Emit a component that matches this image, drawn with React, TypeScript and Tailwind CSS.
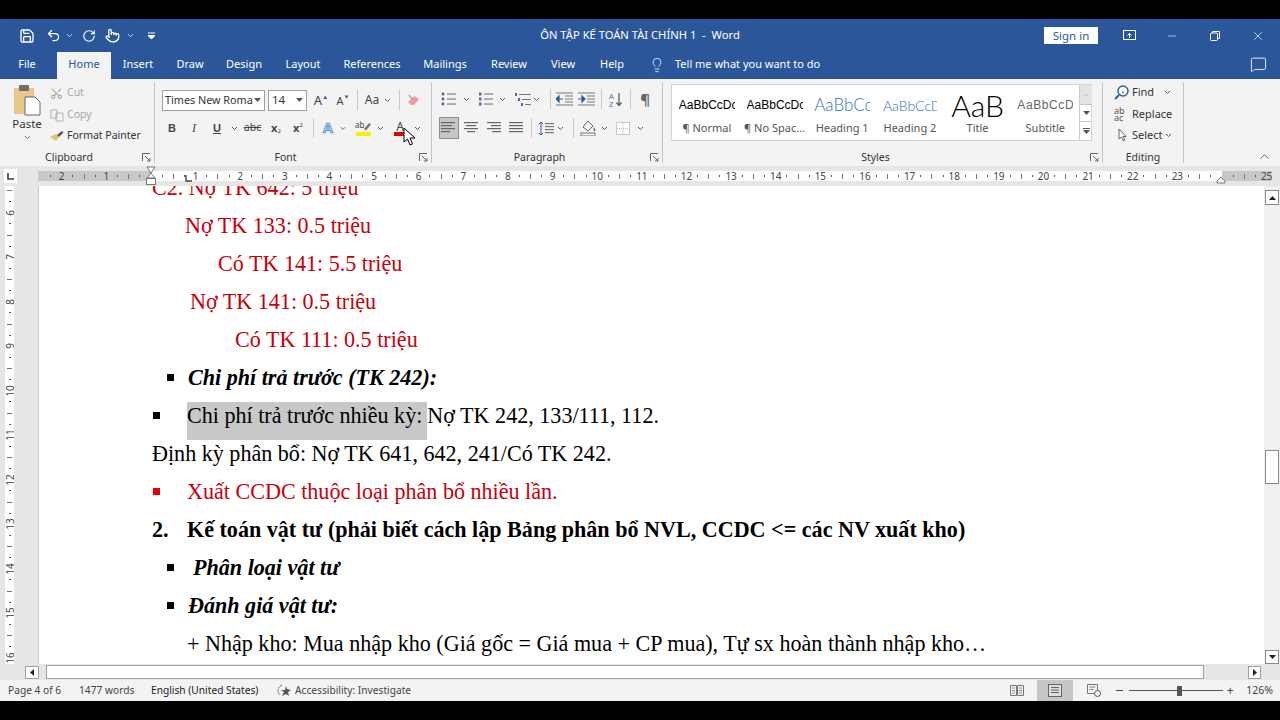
import type { ReactNode } from "react";
import {
  ChevronDown,
  ChevronUp,
  Lightbulb,
  Minus,
  Pointer,
  RotateCw,
  Save,
  Scissors,
  Undo2,
  X,
  MessageSquare,
} from "lucide-react";

function Cell({ w, ml, children }: { w: string; ml?: string; children?: ReactNode }) {
  return <div className={`flex shrink-0 items-center justify-center ${w} ${ml ?? ""}`}>{children}</div>;
}

function Chev({ className }: { className?: string }) {
  return (
    <svg width="7" height="5" viewBox="0 0 7 5" className={className ?? ""}>
      <path d="M1 1l2.5 2.5L6 1" fill="none" stroke="#555" strokeWidth="1" />
    </svg>
  );
}

function Sep({ ml }: { ml: string }) {
  return <div className={`h-[20px] w-px shrink-0 bg-[#c9c9c9] ${ml}`} />;
}

function Launcher() {
  return (
    <svg width="9" height="9" viewBox="0 0 9 9">
      <path d="M.5 8V.5H8M3 3l5 5M8 5v3H5" fill="none" stroke="#666" strokeWidth="1" />
    </svg>
  );
}

function GroupLabel({ children, launcherClass, labelClass }: { children: string; launcherClass: string; labelClass?: string }) {
  return (
    <div className="flex h-[17px] items-center">
      <div className={`flex-1 text-center text-[10.5px] text-[#333] ${labelClass ?? ""}`}>{children}</div>
      <div className={launcherClass}>
        <Launcher />
      </div>
    </div>
  );
}

// horizontal lines icon used for align / list buttons
function Lines({ rows, color = "#666" }: { rows: [number, number][]; color?: string }) {
  return (
    <svg width="16" height="14" viewBox="0 0 16 14">
      {rows.map(([x, w], i) => (
        <rect key={i} x={x} y={1 + i * 3} width={w} height="1.2" fill={color} />
      ))}
    </svg>
  );
}

function ListIcon({ numbered }: { numbered?: boolean }) {
  return (
    <svg width="16" height="15" viewBox="0 0 16 15">
      {[2, 7, 12].map((y) =>
        numbered ? (
          <rect key={y} x="1" y={y - 1.5} width="2.5" height="3" fill="#4a6fa5" />
        ) : (
          <circle key={y} cx="2" cy={y} r="1.4" fill="#44608f" />
        ),
      )}
      {[2, 7, 12].map((y) => (
        <rect key={y} x="6" y={y - 0.5} width="9" height="1.1" fill="#777" />
      ))}
    </svg>
  );
}

function IndentIcon({ flip }: { flip?: boolean }) {
  return (
    <svg width="17" height="14" viewBox="0 0 17 14">
      <rect x="0" y="0.5" width="17" height="1" fill="#777" />
      <rect x="0" y="12.5" width="17" height="1" fill="#777" />
      {[3.5, 6.5, 9.5].map((y) => (
        <rect key={y} x="9" y={y} width="8" height="1" fill="#777" />
      ))}
      <path d={flip ? "M0 7h4M4 4l3 3-3 3z" : "M7 7H3M3 4L0 7l3 3z"} stroke="#2f5c9a" strokeWidth="1.2" fill="#2f5c9a" />
    </svg>
  );
}

function StyleItem({ sample, label, w }: { sample: ReactNode; label: string; w: string }) {
  return (
    <div className={`flex shrink-0 flex-col items-center ${w}`}>
      <div className="flex h-[34px] w-full items-center justify-center whitespace-nowrap">{sample}</div>
      <div className="-mt-[2px] whitespace-nowrap text-[11px] text-[#555]">{label}</div>
    </div>
  );
}

function HRuler() {
  const cells = [];
  for (let k = -9; k <= 100; k++) {
    const m = ((k % 4) + 4) % 4;
    let inner: ReactNode = null;
    if (k === 0 || k === 96) inner = null;
    else if (m === 0) inner = <span className="text-[10px] leading-none text-[#444]">{Math.abs(k) / 4}</span>;
    else if (m === 2) inner = <div className="h-[5px] w-px bg-[#777]" />;
    else inner = <div className="h-[2px] w-px bg-[#555]" />;
    cells.push(
      <div key={k} className="flex h-full w-[11.16px] shrink-0 items-center justify-center">
        {inner}
      </div>,
    );
  }
  return cells;
}

function VRuler() {
  const cells = [];
  for (let k = -2; k <= 42; k++) {
    const m = ((k % 4) + 4) % 4;
    let inner: ReactNode = null;
    if (m === 0) inner = <span className="-rotate-90 text-[10px] leading-none text-[#444]">{6 + k / 4}</span>;
    else if (m === 2) inner = <div className="h-px w-[5px] bg-[#777]" />;
    else inner = <div className="h-px w-[2px] bg-[#555]" />;
    cells.push(
      <div key={k} className="flex h-[11.14px] w-full shrink-0 items-center justify-center">
        {inner}
      </div>,
    );
  }
  return cells;
}

function Line({ pl, className, children }: { pl: string; className?: string; children: ReactNode }) {
  return <div className={`flex h-[38px] shrink-0 items-center whitespace-pre ${pl} ${className ?? ""}`}>{children}</div>;
}

function Bullet({ ml, color = "bg-black" }: { ml: string; color?: string }) {
  return <div className={`-mt-[2px] h-[7px] w-[7px] shrink-0 ${color} ${ml}`} />;
}

const RED = "text-[#c8000c]";

export default function App() {
  return (
    <div className="flex h-screen w-[1280px] flex-col overflow-hidden bg-black font-['Noto_Sans',sans-serif]">
      <div className="h-[19px] shrink-0 bg-black" />

      {/* title bar */}
      <div className="h-[60px] shrink-0 bg-[#2b579a] text-white">
        <div className="flex h-[33px] items-center">
          <div className="flex w-[340px] items-center">
            <Cell w="w-[18px]" ml="ml-[18px]">
              <Save size={16} strokeWidth={2} />
            </Cell>
            <Cell w="w-[20px]" ml="ml-[7px]">
              <Undo2 size={15} strokeWidth={2} />
            </Cell>
            <Cell w="w-[10px]" ml="ml-[1px]">
              <ChevronDown size={9} strokeWidth={2} />
            </Cell>
            <Cell w="w-[20px]" ml="ml-[5px]">
              <RotateCw size={14} strokeWidth={2} />
            </Cell>
            <Cell w="w-[16px]" ml="ml-[5px]">
              <Pointer size={15} strokeWidth={2} />
            </Cell>
            <Cell w="w-[10px]" ml="ml-[5px]">
              <ChevronDown size={9} strokeWidth={2} />
            </Cell>
            <Cell w="w-[10px]" ml="ml-[11px]">
              <svg width="7" height="8" viewBox="0 0 7 8">
                <path d="M0 1h7M0 3.5h7L3.5 7z" stroke="white" fill="white" strokeWidth="1" />
              </svg>
            </Cell>
          </div>
          <div className="flex-1 text-center text-[11.2px] whitespace-pre">ÔN TẬP KẾ TOÁN TÀI CHÍNH 1  -  Word</div>
          <div className="flex w-[340px] items-center">
            <div className="ml-[104px] flex h-[17px] w-[54px] items-center justify-center bg-white text-[11.5px] text-[#2b579a]">
              Sign in
            </div>
            <Cell w="w-[16px]" ml="ml-[23px]">
              <svg width="13" height="11" viewBox="0 0 13 11">
                <rect x=".5" y=".5" width="12" height="9" fill="none" stroke="white" />
                <path d="M6.5 8V3.5M4.5 5.5l2-2 2 2" stroke="white" fill="none" />
              </svg>
            </Cell>
            <Cell w="w-[16px]" ml="ml-[27px]">
              <Minus size={12} strokeWidth={1.2} />
            </Cell>
            <Cell w="w-[16px]" ml="ml-[27px]">
              <svg width="10" height="10" viewBox="0 0 10 10">
                <rect x=".5" y="2" width="7" height="7.5" rx="1" fill="none" stroke="white" />
                <path d="M2.5 2V.5h7v7H7.5" fill="none" stroke="white" />
              </svg>
            </Cell>
            <Cell w="w-[16px]" ml="ml-[27px]">
              <X size={14} strokeWidth={1.2} />
            </Cell>
          </div>
        </div>
        <div className="flex h-[27px] items-end text-[11px]">
          <Cell w="w-[38px] h-[27px] pb-[2px]" ml="ml-[8px]">
            File
          </Cell>
          <Cell w="w-[54px] h-[27px] pb-[2px] bg-[#f3f3f3] text-[#2b579a]" ml="ml-[11px]">
            Home
          </Cell>
          <Cell w="w-[54px] h-[27px] pb-[2px]">Insert</Cell>
          <Cell w="w-[50px] h-[27px] pb-[2px]">Draw</Cell>
          <Cell w="w-[58px] h-[27px] pb-[2px]">Design</Cell>
          <Cell w="w-[60px] h-[27px] pb-[2px]">Layout</Cell>
          <Cell w="w-[78px] h-[27px] pb-[2px]">References</Cell>
          <Cell w="w-[68px] h-[27px] pb-[2px]">Mailings</Cell>
          <Cell w="w-[60px] h-[27px] pb-[2px]">Review</Cell>
          <Cell w="w-[48px] h-[27px] pb-[2px]">View</Cell>
          <Cell w="w-[50px] h-[27px] pb-[2px]">Help</Cell>
          <Cell w="w-[16px] h-[27px] pb-[2px]" ml="ml-[12px]">
            <Lightbulb size={16} strokeWidth={1.2} />
          </Cell>
          <div className="ml-[10px] flex h-[27px] items-center whitespace-nowrap pb-[2px]">Tell me what you want to do</div>
          <div className="flex h-[27px] flex-1 items-center justify-end pb-[3px] pr-[13px]">
            <MessageSquare size={17} strokeWidth={1.2} />
          </div>
        </div>
      </div>

      {/* ribbon */}
      <div className="relative flex h-[87px] shrink-0 bg-[#f3f3f3] text-[#444]">
        {/* clipboard */}
        <div className="flex w-[154px] shrink-0 flex-col">
          <div className="flex h-[70px] pt-[2px]">
            <div className="ml-[8px] flex w-[38px] flex-col items-center">
              <svg width="28" height="32" viewBox="0 0 28 32" className="mt-[3px]">
                <rect x="1" y="4" width="20" height="26" fill="#e8c88a" />
                <rect x="6" y="1" width="10" height="6" rx="1" fill="#6d6d6d" />
                <path d="M12 13h10l5 5v13H12z" fill="white" stroke="#666" />
              </svg>
              <div className="mt-[1px] text-[11.5px] leading-[14px] text-[#333]">Paste</div>
              <ChevronDown size={9} className="mt-[2px]" />
            </div>
            <div className="ml-[4px] flex flex-col pt-[1px]">
              <div className="flex h-[22px] items-center text-[10.5px] text-[#a6a6a6]">
                <Scissors size={13} className="mr-[4px] -rotate-90" />
                <span>Cut</span>
              </div>
              <div className="flex h-[22px] items-center text-[10.5px] text-[#a6a6a6]">
                <svg width="14" height="13" viewBox="0 0 14 13" className="mr-[3px]">
                  <path d="M1 1h6v8H1zM6 4h7v8H6z" fill="#f3f3f3" stroke="#b0b0b0" />
                </svg>
                <span>Copy</span>
              </div>
              <div className="flex h-[20px] items-center text-[10.5px] text-[#333]">
                <svg width="14" height="12" viewBox="0 0 14 12" className="mr-[3px]">
                  <path d="M0 7l6-3 3 3-3 4z" fill="#e3c06e" />
                  <path d="M7 5l5-4 1.5 1.5L9 7z" fill="#555" />
                </svg>
                <span className="whitespace-nowrap">Format Painter</span>
              </div>
            </div>
          </div>
          <GroupLabel launcherClass="mr-[3px]" labelClass="pr-[4px]">Clipboard</GroupLabel>
        </div>
        <div className="my-[3px] w-px shrink-0 bg-[#c4c4c4]" />

        {/* font */}
        <div className="flex w-[276px] shrink-0 flex-col pl-[7px]">
          <div className="flex h-[70px] flex-col">
            <div className="mt-[10px] flex h-[22px] items-center">
              <div className="flex h-[21px] w-[103px] shrink-0 items-center justify-between border border-[#9f9f9f] bg-white pl-[2px] pr-[3px] text-[10.8px] whitespace-nowrap text-[#333]">
                <span>Times New Roma</span>
                <svg width="7" height="4" viewBox="0 0 7 4">
                  <path d="M0 0h7L3.5 4z" fill="#555" />
                </svg>
              </div>
              <div className="ml-[3px] flex h-[21px] w-[39px] shrink-0 items-center justify-between border border-[#9f9f9f] bg-white pl-[3px] pr-[3px] text-[11.5px] text-[#333]">
                <span>14</span>
                <svg width="7" height="4" viewBox="0 0 7 4">
                  <path d="M0 0h7L3.5 4z" fill="#555" />
                </svg>
              </div>
              <Cell w="w-[24px]" ml="ml-[2px]">
                <span className="text-[13px] leading-none">A</span>
                <span className="mb-[6px] text-[6px] leading-none text-[#2f5c9a]">▲</span>
              </Cell>
              <Cell w="w-[20px]">
                <span className="text-[11px] leading-none">A</span>
                <span className="mb-[6px] text-[6px] leading-none text-[#2f5c9a]">▼</span>
              </Cell>
              <Sep ml="ml-[4px]" />
              <Cell w="w-[20px] text-[12px]" ml="ml-[4px]">
                Aa
              </Cell>
              <Cell w="w-[10px]">
                <Chev />
              </Cell>
              <Sep ml="ml-[7px]" />
              <Cell w="w-[20px]" ml="ml-[4px]">
                <svg width="14" height="13" viewBox="0 0 14 13">
                  <path d="M1 8l6-6 5 3-5 6H4z" fill="#ef9aa8" />
                  <path d="M2 1l3 4" stroke="#777" />
                </svg>
              </Cell>
            </div>
            <div className="mt-[6px] flex h-[22px] items-center text-[11px] text-[#444]">
              <Cell w="w-[20px]">
                <b className="font-['Liberation_Sans',sans-serif]">B</b>
              </Cell>
              <Cell w="w-[24px]">
                <i className="font-['Liberation_Serif',serif] text-[12px]">I</i>
              </Cell>
              <Cell w="w-[22px]">
                <u className="font-['Liberation_Sans',sans-serif] font-bold">U</u>
              </Cell>
              <Cell w="w-[12px]">
                <Chev />
              </Cell>
              <Cell w="w-[25px] line-through text-[10.5px]">abc</Cell>
              <Cell w="w-[22px]">
                <b>x</b>
                <span className="mt-[6px] text-[6px] leading-none">2</span>
              </Cell>
              <Cell w="w-[22px]">
                <b>x</b>
                <span className="mb-[6px] text-[6px] leading-none">2</span>
              </Cell>
              <Sep ml="ml-[4px]" />
              <Cell w="w-[24px] font-['Liberation_Sans',sans-serif] text-[15px] font-bold text-[#c7daf2] [-webkit-text-stroke:0.7px_#2f6fbb]" ml="ml-[2px]">
                A
              </Cell>
              <Cell w="w-[6px]">
                <Chev />
              </Cell>
              <Cell w="w-[26px]" ml="ml-[4px]">
                <svg width="17" height="15" viewBox="0 0 17 15">
                  <text x="0" y="7" fontSize="8" fill="#444">ab</text>
                  <path d="M9 8l5-6 2 1.5-5 6z" fill="#777" />
                  <rect x="1" y="11" width="15" height="4" fill="#f4f000" />
                </svg>
              </Cell>
              <Cell w="w-[8px]">
                <Chev />
              </Cell>
              <Cell w="w-[24px]" ml="ml-[4px]">
                <div className="flex flex-col items-center">
                  <span className="text-[12px] leading-[11px] text-[#444]">A</span>
                  <div className="h-[4px] w-[13px] bg-[#e00000]" />
                </div>
              </Cell>
              <Cell w="w-[10px]">
                <Chev />
              </Cell>
            </div>
          </div>
          <GroupLabel launcherClass="mr-[3px]" labelClass="pr-[10px]">Font</GroupLabel>
        </div>
        <div className="my-[3px] w-px shrink-0 bg-[#c4c4c4]" />

        {/* paragraph */}
        <div className="flex w-[230px] shrink-0 flex-col pl-[7px]">
          <div className="flex h-[70px] flex-col">
            <div className="mt-[9px] flex h-[22px] items-center">
              <Cell w="w-[20px]">
                <ListIcon />
              </Cell>
              <Cell w="w-[10px]" ml="ml-[2px]">
                <Chev />
              </Cell>
              <Cell w="w-[20px]" ml="ml-[5px]">
                <ListIcon numbered />
              </Cell>
              <Cell w="w-[10px]" ml="ml-px">
                <Chev />
              </Cell>
              <Cell w="w-[18px]" ml="ml-[7px]">
                <svg width="17" height="15" viewBox="0 0 17 15">
                  <rect x="0" y="1" width="2" height="3" fill="#4a6fa5" />
                  <rect x="4" y="2" width="12" height="1" fill="#777" />
                  <rect x="3" y="6" width="2" height="3" fill="#4a6fa5" />
                  <rect x="7" y="7" width="9" height="1" fill="#777" />
                  <rect x="6" y="11" width="2" height="3" fill="#4a6fa5" />
                  <rect x="10" y="12" width="6" height="1" fill="#777" />
                </svg>
              </Cell>
              <Cell w="w-[8px]">
                <Chev />
              </Cell>
              <Sep ml="ml-[10px]" />
              <Cell w="w-[22px]" ml="ml-[2px]">
                <IndentIcon />
              </Cell>
              <Cell w="w-[22px]">
                <IndentIcon flip />
              </Cell>
              <Sep ml="ml-[4px]" />
              <Cell w="w-[20px]" ml="ml-[4px]">
                <svg width="14" height="15" viewBox="0 0 14 15">
                  <text x="0" y="7" fontSize="7.5" fill="#4a6fa5">A</text>
                  <text x="0" y="14.5" fontSize="7.5" fill="#4a6fa5">Z</text>
                  <path d="M10 1v12M7.5 10.5l2.5 3 2.5-3" fill="none" stroke="#555" strokeWidth="1.2" />
                </svg>
              </Cell>
              <Sep ml="ml-[4px]" />
              <Cell w="w-[20px] text-[15px] font-bold leading-none text-[#666]" ml="ml-[4px]">
                ¶
              </Cell>
            </div>
            <div className="mt-[7px] flex h-[22px] items-center">
              <Cell w="w-[20px] h-[22px] border border-[#8f8f8f] bg-[#c6c6c6]">
                <Lines rows={[[0, 14], [0, 11], [0, 14], [0, 9]]} />
              </Cell>
              <Cell w="w-[20px]" ml="ml-[2px]">
                <Lines rows={[[1, 14], [3, 10], [1, 14], [4, 8]]} />
              </Cell>
              <Cell w="w-[20px]" ml="ml-[2px]">
                <Lines rows={[[2, 14], [6, 10], [2, 14], [7, 9]]} />
              </Cell>
              <Cell w="w-[20px]" ml="ml-[3px]">
                <Lines rows={[[1, 14], [1, 14], [1, 14], [1, 14]]} />
              </Cell>
              <Sep ml="ml-[5px]" />
              <Cell w="w-[20px]" ml="ml-[4px]">
                <svg width="16" height="15" viewBox="0 0 16 15">
                  <path d="M3 1v13M1 3l2-2 2 2M1 12l2 2 2-2" fill="none" stroke="#2f5c9a" />
                  {[2, 5, 8, 11].map((y) => (
                    <rect key={y} x="7" y={y} width="9" height="1.2" fill="#777" />
                  ))}
                </svg>
              </Cell>
              <Cell w="w-[8px]">
                <Chev />
              </Cell>
              <Sep ml="ml-[9px]" />
              <Cell w="w-[20px]" ml="ml-[4px]">
                <svg width="17" height="16" viewBox="0 0 17 16">
                  <path d="M8 1L3 7l5 4 5-5z" fill="#f3f3f3" stroke="#666" />
                  <path d="M14 7c1 2 2 3 1 4s-2 0-1-4z" fill="#666" />
                  <rect x="1" y="13" width="14" height="3" fill="#f3f3f3" stroke="#777" />
                </svg>
              </Cell>
              <Cell w="w-[8px]" ml="ml-[2px]">
                <Chev />
              </Cell>
              <Cell w="w-[20px]" ml="ml-[5px]">
                <svg width="14" height="13" viewBox="0 0 14 13">
                  <rect x=".5" y=".5" width="13" height="12" fill="white" stroke="#999" strokeDasharray="1 1" />
                  <path d="M7 1v11M1 6.5h12" stroke="#bbb" strokeDasharray="1 1" />
                </svg>
              </Cell>
              <Cell w="w-[8px]" ml="ml-[3px]">
                <Chev />
              </Cell>
            </div>
          </div>
          <GroupLabel launcherClass="mr-[3px]" labelClass="pr-[10px]">Paragraph</GroupLabel>
        </div>
        <div className="my-[3px] w-px shrink-0 bg-[#c4c4c4]" />

        {/* styles */}
        <div className="flex w-[439px] shrink-0 flex-col pl-[8px]">
          <div className="flex h-[70px]">
            <div className="mt-[5px] flex h-[57px] w-[421px] shrink-0 border border-[#d4d4d4] bg-white pt-[3px]">
              <div className="ml-px flex w-[406px] shrink-0">
                <StyleItem w="w-[67.7px]" label="¶ Normal" sample={<span className="w-[56px] overflow-hidden font-['Liberation_Sans',sans-serif] text-[12px] text-black">AaBbCcDc</span>} />
                <StyleItem w="w-[67.7px]" label="¶ No Spac..." sample={<span className="w-[56px] overflow-hidden font-['Liberation_Sans',sans-serif] text-[12px] text-black">AaBbCcDc</span>} />
                <StyleItem w="w-[67.7px]" label="Heading 1" sample={<span className="w-[56px] overflow-hidden font-['Lato',sans-serif] text-[17px] font-light text-[#2e74b5]">AaBbCc</span>} />
                <StyleItem w="w-[67.7px]" label="Heading 2" sample={<span className="w-[54px] overflow-hidden font-['Lato',sans-serif] text-[14px] font-light text-[#2e74b5]">AaBbCcD</span>} />
                <StyleItem w="w-[67.7px]" label="Title" sample={<span className="font-['Lato',sans-serif] text-[30px] font-light leading-none text-black">AaB</span>} />
                <StyleItem w="w-[67.7px]" label="Subtitle" sample={<span className="w-[56px] overflow-hidden font-['Liberation_Sans',sans-serif] text-[12px] tracking-[0.6px] text-[#666]">AaBbCcD</span>} />
              </div>
              <div className="-mt-[3px] ml-[0px] flex h-[55px] w-[13px] shrink-0 flex-col border-l border-[#c9c9c9]">
                <div className="flex h-[19px] items-center justify-center bg-[#e4e4e4]">
                  <ChevronUp size={8} color="#aaa" />
                </div>
                <div className="flex h-[18px] items-center justify-center border-y border-[#c9c9c9]">
                  <svg width="7" height="4" viewBox="0 0 7 4">
                    <path d="M0 0h7L3.5 4z" fill="#555" />
                  </svg>
                </div>
                <div className="flex flex-1 flex-col items-center justify-center gap-px">
                  <div className="h-px w-[7px] bg-[#555]" />
                  <svg width="7" height="4" viewBox="0 0 7 4">
                    <path d="M0 0h7L3.5 4z" fill="#555" />
                  </svg>
                </div>
              </div>
            </div>
          </div>
          <GroupLabel launcherClass="mr-[3px]" labelClass="pr-[10px]">Styles</GroupLabel>
        </div>
        <div className="my-[3px] w-px shrink-0 bg-[#c4c4c4]" />

        {/* editing */}
        <div className="flex w-[80px] shrink-0 flex-col">
          <div className="flex h-[70px] flex-col pl-[11px] pt-[2px] text-[11px] text-[#333]">
            <div className="flex h-[22px] items-center">
              <svg width="15" height="15" viewBox="0 0 15 15" className="mr-[3px]">
                <circle cx="9" cy="6" r="5" fill="white" stroke="#2f5c9a" strokeWidth="1.4" />
                <path d="M5 10l-4 4" stroke="#2f5c9a" strokeWidth="2" />
                <path d="M9 4v.5M9 6v2.5" stroke="#444" />
              </svg>
              <span>Find</span>
              <Chev className="ml-[10px]" />
            </div>
            <div className="flex h-[22px] items-center">
              <span className="mr-[3px] w-[15px] text-[9px] leading-[7px] text-[#555]">
                ab
                <br />
                ac
              </span>
              <span>Replace</span>
            </div>
            <div className="flex h-[20px] items-center">
              <svg width="15" height="14" viewBox="0 0 15 14" className="mr-[3px]">
                <path d="M5 1v10l2.5-2 2 4 1.500-1-2-3.500h3z" fill="white" stroke="#666" />
              </svg>
              <span>Select</span>
              <Chev className="ml-[2px]" />
            </div>
          </div>
          <GroupLabel launcherClass="hidden">Editing</GroupLabel>
        </div>
        <div className="my-[3px] w-px shrink-0 bg-[#c4c4c4]" />
        <div className="flex flex-1 items-end justify-end pb-[2px] pr-[8px]">
          <ChevronUp size={15} strokeWidth={1.2} className="text-[#444]" />
        </div>

        {/* mouse cursor */}
        <svg width="13" height="19" viewBox="0 0 13 19" className="absolute left-[403px] top-[48px]">
          <path d="M1 1v14l3.500-3 2.500 6 2.500-1-2.500-6H12z" fill="white" stroke="black" />
        </svg>
      </div>

      {/* ruler */}
      <div className="relative flex h-[20px] shrink-0 items-center bg-[#e6e6e6]">
        <div className="ml-[4px] flex h-[14px] w-[13px] items-center justify-center bg-white">
          <svg width="7" height="7" viewBox="0 0 7 7">
            <path d="M1 0v6h6" fill="none" stroke="#444" strokeWidth="1.6" />
          </svg>
        </div>
        <div className="relative ml-[21px] h-[10px] flex-1">
          <div className="flex h-full">
            <div className="h-full w-[113px] bg-[#c8c8c8]" />
            <div className="h-full w-[1071px] bg-white" />
            <div className="h-full flex-1 bg-[#c8c8c8]" />
          </div>
          <div className="absolute inset-0 flex pl-[7px]">{HRuler()}</div>
        </div>
        <div className="w-[8px] shrink-0" />
        <svg width="10" height="20" viewBox="0 0 10 20" className="absolute left-[146px] top-0">
          <path d="M1 1h8L5 7l4 5v0H1l4-5z" fill="white" stroke="#777" />
          <rect x=".5" y="12.500" width="9" height="6" fill="white" stroke="#777" />
        </svg>
        <svg width="10" height="8" viewBox="0 0 10 8" className="absolute left-[1216px] top-[10px]">
          <path d="M5 1l4 4v2H1V5z" fill="white" stroke="#777" />
        </svg>
        <svg width="7" height="7" viewBox="0 0 7 7" className="absolute left-[185px] top-[9px]">
          <path d="M1 0v6h6" fill="none" stroke="#444" strokeWidth="1.4" />
        </svg>
      </div>

      {/* document area */}
      <div className="flex min-h-0 flex-1 bg-[#e6e6e6]">
        <div className="w-[38px] shrink-0">
          <div className="ml-[5px] flex h-full w-[9px] flex-col overflow-hidden bg-white text-[#444]">
            <div className="-mt-[1px]" />
            {VRuler()}
          </div>
        </div>
        <div className="w-px shrink-0 bg-[#c6c6c6]" />
        <div className="flex min-w-0 flex-1 flex-col overflow-hidden bg-white font-['Liberation_Serif',serif] text-[22.1px] leading-none text-black">
          <div className="-mt-[17px]" />
          <Line pl="pl-[113px]" className={RED}>C2. Nợ TK 642: 5 triệu</Line>
          <Line pl="pl-[146px]" className={RED}>Nợ TK 133: 0.5 triệu</Line>
          <Line pl="pl-[179px]" className={RED}>Có TK 141: 5.5 triệu</Line>
          <Line pl="pl-[151px]" className={RED}>Nợ TK 141: 0.5 triệu</Line>
          <Line pl="pl-[196px]" className={RED}>Có TK 111: 0.5 triệu</Line>
          <Line pl="pl-0" className="font-bold italic">
            <Bullet ml="ml-[128px]" />
            <span className="ml-[14px]">Chi phí trả trước (TK 242):</span>
          </Line>
          <Line pl="pl-0">
            <Bullet ml="ml-[114px]" />
            <span className="relative ml-[27px] pr-[5px]">
              <span className="absolute -bottom-[13px] -top-[3px] left-0 right-0 bg-[#c8c8c8]" />
              <span className="relative">Chi phí trả trước nhiều kỳ:</span>
            </span>
            <span>Nợ TK 242, 133/111, 112.</span>
          </Line>
          <Line pl="pl-[113px]">Định kỳ phân bổ: Nợ TK 641, 642, 241/Có TK 242.</Line>
          <Line pl="pl-0" className={RED}>
            <Bullet ml="ml-[114px]" color="bg-[#e8000c]" />
            <span className="ml-[27px]">Xuất CCDC thuộc loại phân bổ nhiều lần.</span>
          </Line>
          <Line pl="pl-[113px]" className="font-bold">
            <span className="w-[35px]">2.</span>
            <span>Kế toán vật tư (phải biết cách lập Bảng phân bổ NVL, CCDC {"<="} các NV xuất kho)</span>
          </Line>
          <Line pl="pl-0" className="font-bold italic">
            <Bullet ml="ml-[128px]" />
            <span className="ml-[19px]">Phân loại vật tư</span>
          </Line>
          <Line pl="pl-0" className="font-bold italic">
            <Bullet ml="ml-[128px]" />
            <span className="ml-[14px]">Đánh giá vật tư:</span>
          </Line>
          <Line pl="pl-[148px]">+ Nhập kho: Mua nhập kho (Giá gốc = Giá mua + CP mua), Tự sx hoàn thành nhập kho…</Line>
        </div>
        <div className="flex w-[16px] shrink-0 flex-col items-center bg-[#f0f0f0] pt-[4px]">
          <div className="flex h-[15px] w-[14px] items-center justify-center border border-[#8a8a8a] bg-white">
            <svg width="7" height="4" viewBox="0 0 7 4">
              <path d="M0 4h7L3.5 0z" fill="#222" />
            </svg>
          </div>
          <div className="mt-[245px] h-[34px] w-[14px] border border-[#8a8a8a] bg-white" />
          <div className="mt-auto flex h-[14px] w-[14px] items-center justify-center border border-[#8a8a8a] bg-white">
            <svg width="7" height="4" viewBox="0 0 7 4">
              <path d="M0 0h7L3.5 4z" fill="#222" />
            </svg>
          </div>
        </div>
      </div>

      {/* horizontal scroll */}
      <div className="flex h-[16px] shrink-0 items-center bg-[#e6e6e6]">
        <div className="ml-[25px] flex h-[13px] w-[14px] items-center justify-center border border-[#a0a0a0] bg-white">
          <svg width="4" height="7" viewBox="0 0 4 7">
            <path d="M4 0v7L0 3.500z" fill="#222" />
          </svg>
        </div>
        <div className="ml-[7px] h-[14px] w-[1158px] border border-[#a0a0a0] bg-white" />
        <div className="ml-[44px] flex h-[13px] w-[13px] items-center justify-center border border-[#a0a0a0] bg-white">
          <svg width="4" height="7" viewBox="0 0 4 7">
            <path d="M0 0v7l4-3.500z" fill="#222" />
          </svg>
        </div>
      </div>

      {/* status bar */}
      <div className="flex h-[21px] shrink-0 items-center bg-[#f3f3f3] text-[10.2px] whitespace-nowrap text-[#444]">
        <span className="ml-[8px] w-[71px]">Page 4 of 6</span>
        <span className="w-[72px]">1477 words</span>
        <span className="w-[126px] text-[#222]">English (United States)</span>
        <svg width="15" height="14" viewBox="0 0 15 14" className="mr-[3px]">
          <path d="M5 1a6 6 0 0 0-2 10" fill="none" stroke="#555" strokeDasharray="2 1" />
          <path d="M9 2l1 3 4 1-3 2 1 4-3-2-4 2 2-4-3-2h4z" fill="#555" />
        </svg>
        <span>Accessibility: Investigate</span>
        <div className="flex-1" />
        <Cell w="w-[16px]">
          <svg width="14" height="13" viewBox="0 0 14 13">
            <path d="M.5 1.500h6v10h-6zM7.500 1.500h6v10h-6z" fill="#f3f3f3" stroke="#777" />
            <path d="M2 4h3M2 6.500h3M2 9h3M9 4h3M9 6.500h3M9 9h3" stroke="#888" />
          </svg>
        </Cell>
        <Cell w="w-[36px] h-[21px] bg-[#c6c6c6]" ml="ml-[12px]">
          <svg width="14" height="13" viewBox="0 0 14 13">
            <rect x=".5" y=".5" width="13" height="12" fill="#ddd" stroke="#666" />
            <path d="M3 3.500h8M3 6h8M3 8.500h8" stroke="#666" />
          </svg>
        </Cell>
        <Cell w="w-[16px]" ml="ml-[13px]">
          <svg width="14" height="13" viewBox="0 0 14 13">
            <path d="M.5.5h10v9H.5z" fill="#f3f3f3" stroke="#777" />
            <path d="M2.500 3h6M2.500 5.500h4" stroke="#888" />
            <circle cx="10.500" cy="9.500" r="3" fill="#f3f3f3" stroke="#555" />
          </svg>
        </Cell>
        <Cell w="w-[8px]" ml="ml-[13px]">
          <div className="h-px w-[7px] bg-[#444]" />
        </Cell>
        <div className="ml-[6px] flex h-[21px] w-[94px] shrink-0 items-center">
          <div className="h-px w-[48px] bg-[#555]" />
          <div className="h-[10px] w-[5px] bg-[#555]" />
          <div className="h-px flex-1 bg-[#555]" />
        </div>
        <Cell w="w-[8px]" ml="ml-[3px]">
          <span className="text-[12px] leading-none">+</span>
        </Cell>
        <span className="ml-[12px] mr-[7px] text-[10.5px]">126%</span>
      </div>

      <div className="h-[19px] shrink-0 bg-black" />
    </div>
  );
}
